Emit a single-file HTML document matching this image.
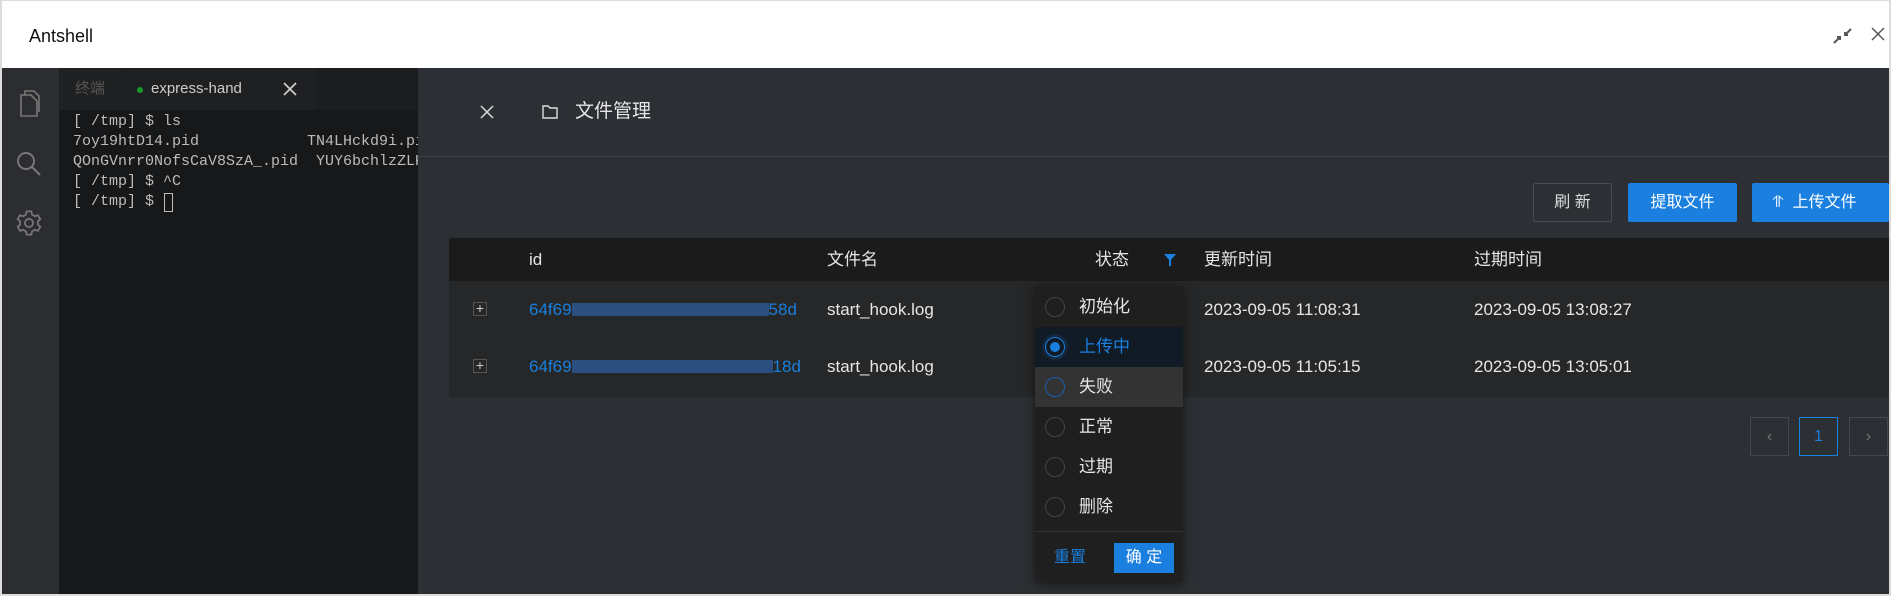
<!DOCTYPE html>
<html><head><meta charset="utf-8"><style>
*{margin:0;padding:0;box-sizing:border-box}
body{width:1891px;height:596px;overflow:hidden;background:#fff;font-family:"Liberation Sans","Noto Sans CJK SC",sans-serif;position:relative}
.a{position:absolute}
.frame{left:0;top:0;width:1891px;height:596px;border:2px solid #dcdcdc;border-top:1px solid #dcdcdc;}
.t{color:#e6e6e6;font-size:17px;white-space:nowrap;line-height:20px}
.term{font-family:"Liberation Mono",monospace;font-size:15px;color:#bbb;line-height:20px;white-space:pre}
.radio{width:20px;height:20px;border-radius:50%;border:1px solid #444}
</style></head><body>
<div class="a" style="left:29px;top:25px;font-size:18px;line-height:22px;color:#111">Antshell</div>
<svg class="a" style="left:1832px;top:26px" width="22" height="20" viewBox="0 0 22 20"><path d="M2 17 L8 11 M5 11 L8 11 L8 14 M19 3 L13 9 M13 6 L13 9 L16 9" stroke="#555" stroke-width="2" fill="none"/></svg>
<svg class="a" style="left:1870px;top:26px" width="16" height="16" viewBox="0 0 16 16"><path d="M2 2L14 14M14 2L2 14" stroke="#555" stroke-width="1.5"/></svg>
<div class="a" style="left:2px;top:68px;width:57px;height:526px;background:#2b2d30"></div>
<svg class="a" style="left:17px;top:88px" width="24" height="30" viewBox="0 0 24 30" fill="none" stroke="#777" stroke-width="1.6"><path d="M4 7H14L20 13V28H4Z"/><path d="M8 7V3H17L22 8V23H20"/></svg>
<svg class="a" style="left:15px;top:150px" width="28" height="28" viewBox="0 0 28 28" fill="none" stroke="#777" stroke-width="2"><circle cx="11" cy="11" r="8"/><path d="M17 17L25 25"/></svg>
<svg class="a" style="left:15px;top:209px" width="28" height="28" viewBox="0 0 24 24" fill="none" stroke="#777" stroke-width="1.5"><circle cx="12" cy="12" r="3.5"/><path d="M10 2h4l.6 2.8 2.4 1.4 2.7-.9 2 3.4-2.1 1.9v2.8l2.1 1.9-2 3.4-2.7-.9-2.4 1.4L14 22h-4l-.6-2.8-2.4-1.4-2.7.9-2-3.4 2.1-1.9v-2.8L2.3 8.7l2-3.4 2.7.9 2.4-1.4z"/></svg>
<div class="a" style="left:59px;top:68px;width:359px;height:526px;background:#17181a"></div>
<div class="a" style="left:59px;top:68px;width:359px;height:42px;background:#1c1d1f"></div>
<div class="a" style="left:59px;top:68px;width:61px;height:42px;background:#202123"></div>
<div class="a" style="left:75px;top:80px;font-size:15px;line-height:18px;color:#555">终端</div>
<div class="a" style="left:121px;top:68px;width:195px;height:42px;background:#1f2022"></div>
<div class="a" style="left:137px;top:87px;width:6px;height:6px;border-radius:50%;background:#1a9a2a"></div>
<div class="a" style="left:151px;top:80px;font-size:15px;line-height:18px;color:#ccc">express-hand</div>
<svg class="a" style="left:283px;top:82px" width="14" height="14" viewBox="0 0 14 14"><path d="M1 1L13 13M13 1L1 13" stroke="#ccc" stroke-width="1.8"/></svg>
<div class="a term" style="left:73px;top:112px">[ /tmp] $ ls
7oy19htD14.pid            TN4LHckd9i.pid
QOnGVnrr0NofsCaV8SzA_.pid  YUY6bchlzZLK
[ /tmp] $ ^C
[ /tmp] $ </div>
<div class="a" style="left:164px;top:193px;width:9px;height:19px;border:1px solid #bbb"></div>
<div class="a" style="left:418px;top:68px;width:1471px;height:526px;background:#2c2f33;overflow:hidden">
 <div class="a" style="left:0;top:88px;width:1471px;height:1px;background:#3d4045"></div>
 <svg class="a" style="left:62px;top:37px" width="14" height="14" viewBox="0 0 14 14"><path d="M1 1L13 13M13 1L1 13" stroke="#ddd" stroke-width="1.5"/></svg>
 <svg class="a" style="left:124px;top:37px" width="16" height="14" viewBox="0 0 16 14" fill="none" stroke="#ddd" stroke-width="1.4"><path d="M1 1H6L8 3H15V13H1Z"/></svg>
 <div class="a t" style="left:157px;top:33px;font-size:19px;line-height:22px">文件管理</div>
 <div class="a" style="left:1115px;top:115px;width:79px;height:39px;border:1px solid #484b50;border-radius:2px;color:#ddd;font-size:16px;text-align:center;line-height:37px">刷 新</div>
 <div class="a" style="left:1210px;top:115px;width:109px;height:39px;background:#1a7fde;border-radius:2px;color:#fff;font-size:16px;text-align:center;line-height:39px">提取文件</div>
 <div class="a" style="left:1334px;top:115px;width:137px;height:39px;background:#1a7fde;border-radius:2px;color:#fff;font-size:16px;line-height:39px;padding-left:20px">⥣&nbsp; 上传文件</div>
 <div class="a" style="left:31px;top:170px;width:1440px;height:43px;background:#1b1b1c"></div>
 <div class="a" style="left:31px;top:213px;width:1440px;height:116px;background:#262728"></div>
 <div class="a t" style="left:111px;top:182px">id</div>
 <div class="a t" style="left:409px;top:182px">文件名</div>
 <div class="a t" style="left:677px;top:182px">状态</div>
 <svg class="a" style="left:746px;top:186px" width="12" height="12" viewBox="0 0 12 12"><path d="M0 0H12L7 6V12H5V6Z" fill="#1a7fde"/></svg>
 <div class="a t" style="left:786px;top:182px">更新时间</div>
 <div class="a t" style="left:1056px;top:182px">过期时间</div>
 <div class="a" style="left:55px;top:234px;width:14px;height:14px;border:1px solid #555;color:#ccc;font-size:14px;line-height:11px;text-align:center">+</div>
 <div class="a" style="left:55px;top:291px;width:14px;height:14px;border:1px solid #555;color:#ccc;font-size:14px;line-height:11px;text-align:center">+</div>
 <div class="a t" style="left:111px;top:232px;color:#1a7fde">64f69<span style="display:inline-block;width:197px;height:13px;background:#2b4f7e;vertical-align:-1px"></span>58d</div>
 <div class="a t" style="left:111px;top:289px;color:#1a7fde">64f69<span style="display:inline-block;width:201px;height:13px;background:#2b4f7e;vertical-align:-1px"></span>18d</div>
 <div class="a t" style="left:409px;top:232px">start_hook.log</div>
 <div class="a t" style="left:409px;top:289px">start_hook.log</div>
 <div class="a t" style="left:786px;top:232px">2023-09-05 11:08:31</div>
 <div class="a t" style="left:786px;top:289px">2023-09-05 11:05:15</div>
 <div class="a t" style="left:1056px;top:232px">2023-09-05 13:08:27</div>
 <div class="a t" style="left:1056px;top:289px">2023-09-05 13:05:01</div>
 <div class="a" style="left:1332px;top:349px;width:39px;height:39px;border:1px solid #44474c;color:#777;text-align:center;line-height:37px;font-size:16px">‹</div>
 <div class="a" style="left:1381px;top:349px;width:39px;height:39px;border:1px solid #1a7fde;color:#1a7fde;text-align:center;line-height:37px;font-size:16px">1</div>
 <div class="a" style="left:1431px;top:349px;width:39px;height:39px;border:1px solid #44474c;color:#777;text-align:center;line-height:37px;font-size:16px">›</div>
</div>
<div class="a" style="left:1035px;top:286px;width:148px;height:295px;background:#1f1f20;box-shadow:0 3px 10px rgba(0,0,0,.5)">
 <div class="a" style="left:0;top:41px;width:148px;height:40px;background:#111b26"></div>
 <div class="a" style="left:0;top:81px;width:148px;height:40px;background:#333"></div>
 <div class="a radio" style="left:10px;top:11px"></div><div class="a t" style="left:44px;top:11px">初始化</div>
 <div class="a radio" style="left:10px;top:51px;border-color:#1a7fde;box-shadow:0 0 0 3px #13283f"><div style="margin:4px;width:10px;height:10px;border-radius:50%;background:#1a7fde"></div></div><div class="a t" style="left:44px;top:51px;color:#1a7fde">上传中</div>
 <div class="a radio" style="left:10px;top:91px;border-color:#1a5fae"></div><div class="a t" style="left:44px;top:91px">失败</div>
 <div class="a radio" style="left:10px;top:131px"></div><div class="a t" style="left:44px;top:131px">正常</div>
 <div class="a radio" style="left:10px;top:171px"></div><div class="a t" style="left:44px;top:171px">过期</div>
 <div class="a radio" style="left:10px;top:211px"></div><div class="a t" style="left:44px;top:211px">删除</div>
 <div class="a" style="left:0;top:245px;width:148px;height:1px;background:#333"></div>
 <div class="a" style="left:19px;top:262px;font-size:16px;line-height:20px;color:#1a7fde">重置</div>
 <div class="a" style="left:79px;top:257px;width:60px;height:30px;background:#1a7fde;color:#fff;font-size:16px;text-align:center;line-height:30px">确 定</div>
</div>
<div class="a frame"></div>
</body></html>
